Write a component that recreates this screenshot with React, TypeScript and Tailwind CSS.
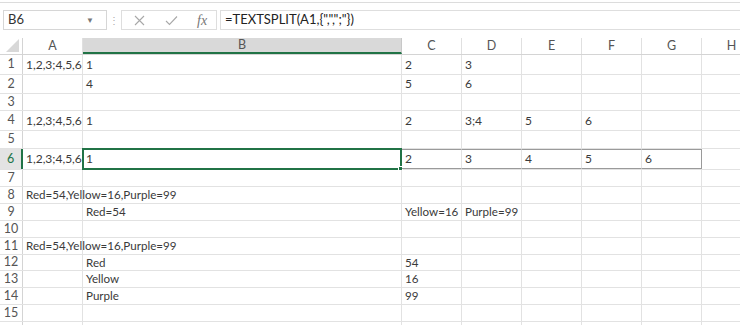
import React from "react";

const cols = [
  { key: "A", w: "w-[60px]" },
  { key: "B", w: "w-[319px]" },
  { key: "C", w: "w-[60px]" },
  { key: "D", w: "w-[60px]" },
  { key: "E", w: "w-[60px]" },
  { key: "F", w: "w-[60px]" },
  { key: "G", w: "w-[60px]" },
  { key: "H", w: "w-[60px]" },
];

type Row = { n: number; h: string; big?: boolean; cells: Record<string, string> };

const rows: Row[] = [
  { n: 1, h: "h-[20px]", big: true, cells: { A: "1,2,3;4,5,6", B: "1", C: "2", D: "3" } },
  { n: 2, h: "h-[19px]", big: true, cells: { B: "4", C: "5", D: "6" } },
  { n: 3, h: "h-[17px]", cells: {} },
  { n: 4, h: "h-[20px]", big: true, cells: { A: "1,2,3;4,5,6", B: "1", C: "2", D: "3;4", E: "5", F: "6" } },
  { n: 5, h: "h-[18px]", cells: {} },
  { n: 6, h: "h-[21px]", big: true, cells: { A: "1,2,3;4,5,6", B: "1", C: "2", D: "3", E: "4", F: "5", G: "6" } },
  { n: 7, h: "h-[17px]", cells: {} },
  { n: 8, h: "h-[17px]", cells: { A: "Red=54,Yellow=16,Purple=99" } },
  { n: 9, h: "h-[17px]", cells: { B: "Red=54", C: "Yellow=16", D: "Purple=99" } },
  { n: 10, h: "h-[17px]", cells: {} },
  { n: 11, h: "h-[17px]", cells: { A: "Red=54,Yellow=16,Purple=99" } },
  { n: 12, h: "h-[16px]", cells: { B: "Red", C: "54" } },
  { n: 13, h: "h-[17px]", cells: { B: "Yellow", C: "16" } },
  { n: 14, h: "h-[17px]", cells: { B: "Purple", C: "99" } },
  { n: 15, h: "h-[17px]", cells: {} },
  { n: 0, h: "h-[17px]", cells: {} },
];

export default function App() {
  return (
    <div className="h-[325px] w-[740px] overflow-hidden bg-white text-[#3a3a3a]" style={{ fontFamily: "Lato, 'Open Sans', sans-serif" }}>
      <div className="mt-[2px] h-[36px] border-t border-[#dcdcdc] pt-[7px]">
        <div className="flex h-[20px] items-stretch">
          <div className="ml-[3px] flex w-[104px] items-center justify-between border border-[#d6d6d6] pl-[4px] pr-[12px] text-[13px] text-[#333]">
            <span>B6</span>
            <span className="text-[8px] text-[#777]">▼</span>
          </div>
          <div className="flex w-[14px] items-center justify-center text-[10px] leading-none text-[#aaa]">⋮</div>
          <div className="flex w-[96px] items-center border border-[#dedede] pl-[12px] text-[#aaa]">
            <svg width="11" height="11" viewBox="0 0 11 11" className="mr-[20px]">
              <path d="M1 1L10 10M10 1L1 10" stroke="#a8a8a8" strokeWidth="1.1" fill="none" />
            </svg>
            <svg width="13" height="11" viewBox="0 0 13 11" className="mr-[19px]">
              <path d="M1 6L4.5 9.5L12 1.5" stroke="#a8a8a8" strokeWidth="1.1" fill="none" />
            </svg>
            <span className="text-[14px] italic text-[#777]" style={{ fontFamily: "'Liberation Serif', serif" }}>fx</span>
          </div>
          <div className="ml-[3px] flex flex-1 items-center border-y border-l border-[#dedede] pl-[4px] text-[13px] text-[#222]">
            =TEXTSPLIT(A1,{'{'}",",";"{'}'})
          </div>
        </div>
      </div>

      <div className="flex h-[17px] border-b border-[#d4d4d4] text-[12.5px] text-[#555]">
        <div className="relative w-[23px] shrink-0 border-r border-[#d4d4d4]">
          <div className="absolute bottom-[2px] right-[3px] h-0 w-0 border-b-[13px] border-l-[13px] border-b-[#d8d8d8] border-l-transparent" />
        </div>
        {cols.map((c) => (
          <div
            key={c.key}
            className={`${c.w} flex shrink-0 items-center justify-center border-r ${
              c.key === "B" ? "border-b-2 border-b-[#217346] bg-[#d9d9d9] border-r-[#c8c8c8]" : "border-[#e0e0e0]"
            }`}
          >
            {c.key}
          </div>
        ))}
      </div>

      {rows.map((r) => (
        <div key={r.n} className={`flex ${r.h} border-b border-[#e2e2e2]`}>
          <div
            className={`flex w-[23px] shrink-0 items-center justify-center border-r text-[12.5px] ${
              r.n === 6 ? "border-r-2 border-r-[#217346] bg-[#e3e3e3] text-[#217346]" : "border-[#d4d4d4] text-[#555]"
            }`}
          >
            {r.n > 0 ? r.n : ""}
          </div>
          {cols.map((c) => {
            const v = r.cells[c.key];
            const selected = r.n === 6 && c.key === "B";
            const spill = r.n === 6 && ["C", "D", "E", "F", "G"].includes(c.key);
            return (
              <div
                key={c.key}
                className={`${c.w} relative flex shrink-0 items-center border-r border-[#e2e2e2] ${
                  r.big ? "text-[12px]" : "text-[11.6px]"
                } ${spill ? "border-y border-y-[#9a9a9a]" : ""} ${c.key === "G" && spill ? "border-r-[#9a9a9a]" : ""}`}
              >
                {selected && (
                  <div className="pointer-events-none absolute -left-[1px] -right-[1px] -top-[1px] bottom-[-1px] border-2 border-[#217346]">
                    <div className="absolute -bottom-[3px] -right-[3px] h-[5px] w-[5px] border border-white bg-[#217346]" />
                  </div>
                )}
                {v && <span className="relative whitespace-nowrap pl-[3px] leading-none">{v}</span>}
              </div>
            );
          })}
        </div>
      ))}
    </div>
  );
}
